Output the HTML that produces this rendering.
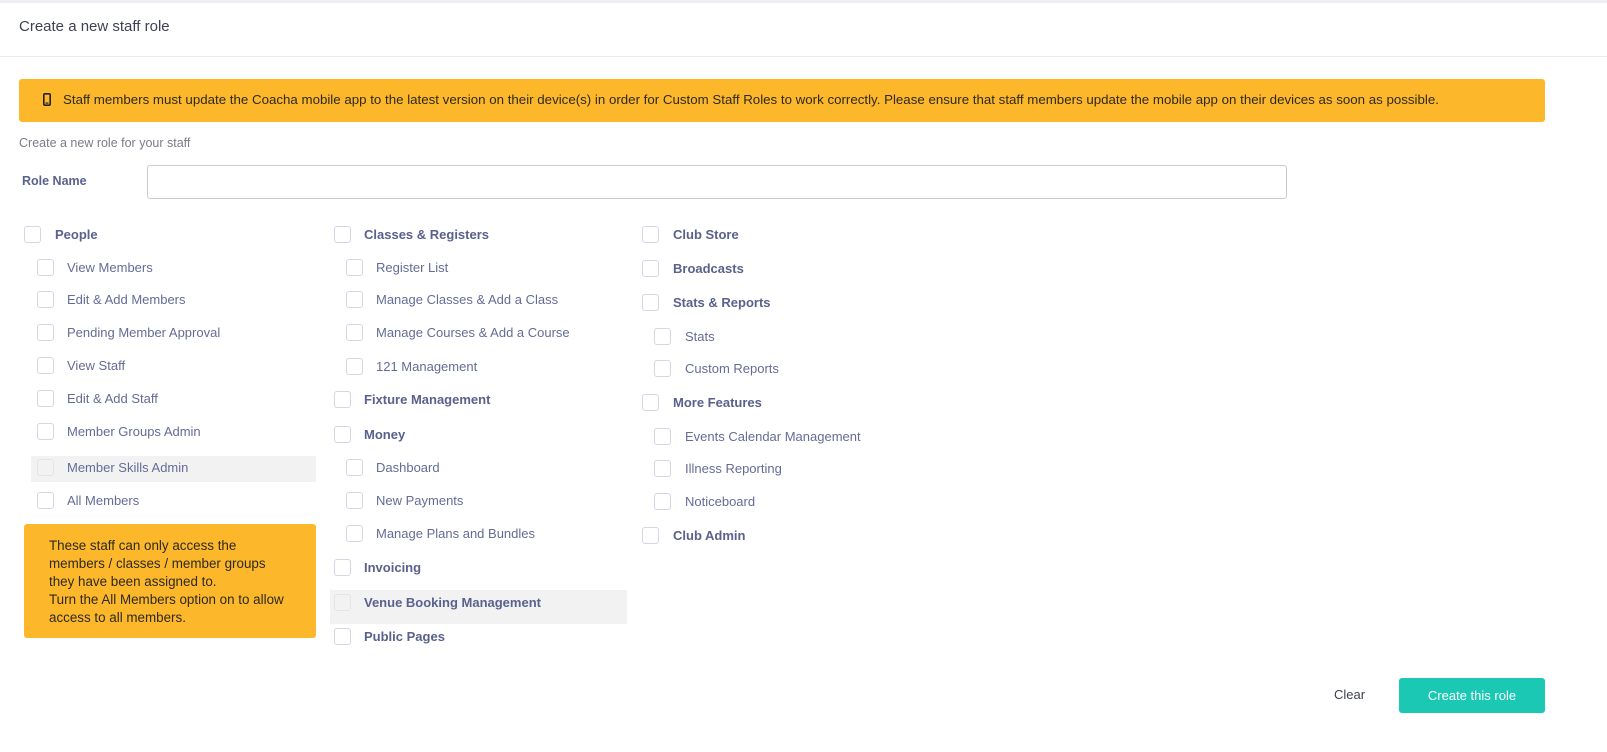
<!DOCTYPE html>
<html><head><meta charset="utf-8"><style>
*{margin:0;padding:0;box-sizing:border-box}
body{width:1607px;height:752px;background:#fff;font-family:"Liberation Sans",sans-serif;position:relative;overflow:hidden;color:#5d6590}
.a{position:absolute}
.cb{position:absolute;width:17px;height:17px;border:1px solid #d3d7e4;border-radius:3px;background:#fff}
.l{position:absolute;font-size:13px;line-height:16px;white-space:nowrap;color:#646c96;margin-top:1px}
.b{font-weight:bold;color:#59618c}
.hl{position:absolute;background:#f2f2f3}
</style></head><body>
<div class="a" style="left:0;top:0;width:1607px;height:3px;background:#eceef2"></div>
<div class="a" style="left:19px;top:18px;font-size:15px;color:#3f4254">Create a new staff role</div>
<div class="a" style="left:0;top:56px;width:1607px;height:1px;background:#ebedf2"></div>
<div class="a" style="left:19px;top:79px;width:1526px;height:43px;background:#fdb72b;border-radius:3px"></div>
<svg class="a" style="left:43px;top:93px" width="8" height="13" viewBox="0 0 8 13"><rect x="0.8" y="0.8" width="6.4" height="11.4" rx="1.2" fill="none" stroke="#222" stroke-width="1.6"/><rect x="2.5" y="9.5" width="3" height="1.2" fill="#222"/></svg>
<div class="a" style="left:63px;top:92px;font-size:13.3px;color:#2d2a1e;white-space:nowrap">Staff members must update the Coacha mobile app to the latest version on their device(s) in order for Custom Staff Roles to work correctly. Please ensure that staff members update the mobile app on their devices as soon as possible.</div>
<div class="a" style="left:19px;top:136px;font-size:12.5px;color:#7a7d88">Create a new role for your staff</div>
<div class="a b" style="left:22px;top:174px;font-size:12.5px">Role Name</div>
<div class="a" style="left:147px;top:165px;width:1140px;height:34px;border:1px solid #c9cbd2;border-radius:3px"></div>

<div class="hl" style="left:31px;top:456px;width:285px;height:26px"></div>
<div class="hl" style="left:330px;top:590px;width:297px;height:34px"></div>

<!-- col1 -->
<div class="cb" style="left:24px;top:226px"></div><div class="l b" style="left:55px;top:226px">People</div>
<div class="cb" style="left:37px;top:259px"></div><div class="l" style="left:67px;top:259px">View Members</div>
<div class="cb" style="left:37px;top:291px"></div><div class="l" style="left:67px;top:291px">Edit &amp; Add Members</div>
<div class="cb" style="left:37px;top:324px"></div><div class="l" style="left:67px;top:324px">Pending Member Approval</div>
<div class="cb" style="left:37px;top:357px"></div><div class="l" style="left:67px;top:357px">View Staff</div>
<div class="cb" style="left:37px;top:390px"></div><div class="l" style="left:67px;top:390px">Edit &amp; Add Staff</div>
<div class="cb" style="left:37px;top:423px"></div><div class="l" style="left:67px;top:423px">Member Groups Admin</div>
<div class="cb" style="left:37px;top:459px;background:#f2f2f3;border-color:#e3e4e8"></div><div class="l" style="left:67px;top:459px">Member Skills Admin</div>
<div class="cb" style="left:37px;top:492px"></div><div class="l" style="left:67px;top:492px">All Members</div>
<div class="a" style="left:24px;top:524px;width:292px;height:114px;background:#fdb72b;border-radius:3px"></div>
<div class="a" style="left:49px;top:537px;font-size:13.4px;line-height:18px;color:#2d2a1e">These staff can only access the<br>members / classes / member groups<br>they have been assigned to.<br>Turn the All Members option on to allow<br>access to all members.</div>

<!-- col2 -->
<div class="cb" style="left:334px;top:226px"></div><div class="l b" style="left:364px;top:226px">Classes &amp; Registers</div>
<div class="cb" style="left:346px;top:259px"></div><div class="l" style="left:376px;top:259px">Register List</div>
<div class="cb" style="left:346px;top:291px"></div><div class="l" style="left:376px;top:291px">Manage Classes &amp; Add a Class</div>
<div class="cb" style="left:346px;top:324px"></div><div class="l" style="left:376px;top:324px">Manage Courses &amp; Add a Course</div>
<div class="cb" style="left:346px;top:358px"></div><div class="l" style="left:376px;top:358px">121 Management</div>
<div class="cb" style="left:334px;top:391px"></div><div class="l b" style="left:364px;top:391px">Fixture Management</div>
<div class="cb" style="left:334px;top:426px"></div><div class="l b" style="left:364px;top:426px">Money</div>
<div class="cb" style="left:346px;top:459px"></div><div class="l" style="left:376px;top:459px">Dashboard</div>
<div class="cb" style="left:346px;top:492px"></div><div class="l" style="left:376px;top:492px">New Payments</div>
<div class="cb" style="left:346px;top:525px"></div><div class="l" style="left:376px;top:525px">Manage Plans and Bundles</div>
<div class="cb" style="left:334px;top:559px"></div><div class="l b" style="left:364px;top:559px">Invoicing</div>
<div class="cb" style="left:334px;top:594px;background:#f2f2f3;border-color:#e3e4e8"></div><div class="l b" style="left:364px;top:594px">Venue Booking Management</div>
<div class="cb" style="left:334px;top:628px"></div><div class="l b" style="left:364px;top:628px">Public Pages</div>

<!-- col3 -->
<div class="cb" style="left:642px;top:226px"></div><div class="l b" style="left:673px;top:226px">Club Store</div>
<div class="cb" style="left:642px;top:260px"></div><div class="l b" style="left:673px;top:260px">Broadcasts</div>
<div class="cb" style="left:642px;top:294px"></div><div class="l b" style="left:673px;top:294px">Stats &amp; Reports</div>
<div class="cb" style="left:654px;top:328px"></div><div class="l" style="left:685px;top:328px">Stats</div>
<div class="cb" style="left:654px;top:360px"></div><div class="l" style="left:685px;top:360px">Custom Reports</div>
<div class="cb" style="left:642px;top:394px"></div><div class="l b" style="left:673px;top:394px">More Features</div>
<div class="cb" style="left:654px;top:428px"></div><div class="l" style="left:685px;top:428px">Events Calendar Management</div>
<div class="cb" style="left:654px;top:460px"></div><div class="l" style="left:685px;top:460px">Illness Reporting</div>
<div class="cb" style="left:654px;top:493px"></div><div class="l" style="left:685px;top:493px">Noticeboard</div>
<div class="cb" style="left:642px;top:527px"></div><div class="l b" style="left:673px;top:527px">Club Admin</div>

<div class="a" style="left:1334px;top:687px;font-size:13px;color:#3f4254">Clear</div>
<div class="a" style="left:1399px;top:678px;width:146px;height:35px;background:#1bc8b4;border-radius:3px;color:#fff;font-size:13px;line-height:35px;text-align:center">Create this role</div>
</body></html>
